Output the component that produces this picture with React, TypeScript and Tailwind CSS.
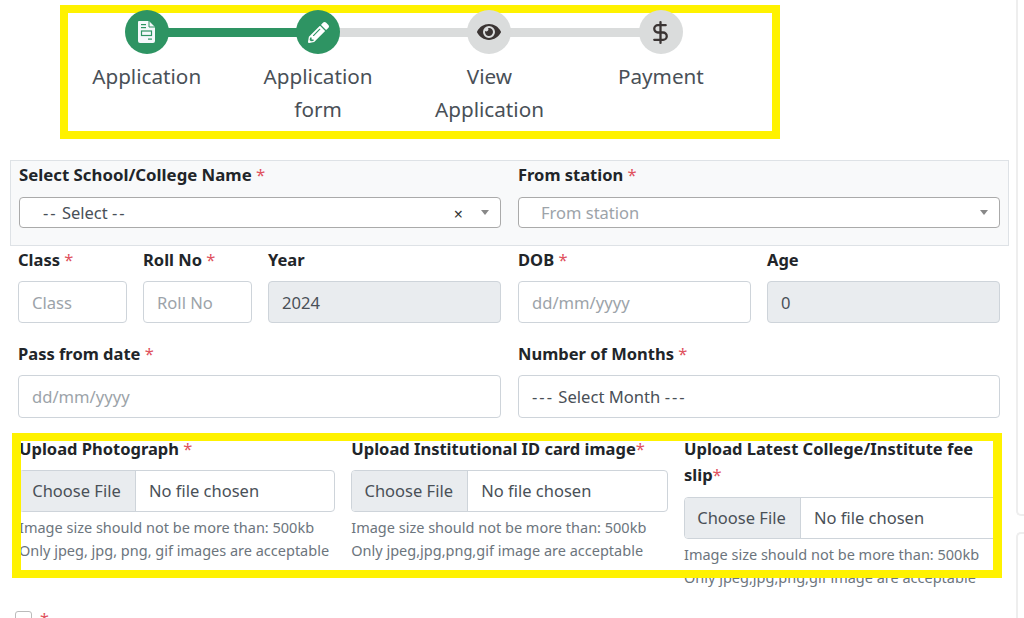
import React from "react";
import { FaPencilAlt, FaEye } from "react-icons/fa";
import { DollarSign } from "lucide-react";

function Req() { return <span className="text-[#e0525e] font-normal"> *</span>; }
function Dash({ children }: { children: string }) { return <span className="tracking-[2px]">{children}</span>; }
function Label({ children, req, className = "text-[16.5px]" }: { children: React.ReactNode; req?: boolean; className?: string }) {
  return <label className={`block font-bold text-[#212529] leading-[26px] ${className}`}>{children}{req && <Req />}</label>;
}
function Box({ text, ph, disabled, className = "h-[42px]" }: { text: React.ReactNode; ph?: boolean; disabled?: boolean; className?: string }) {
  return (
    <div className={`mt-[8px] flex items-center px-[13px] pt-[2px] rounded-[4px] border border-[#ced4da] text-[16.6px] ${disabled ? "bg-[#e9ecef]" : "bg-white"} ${ph ? "text-[#9ca3a9]" : "text-[#495057]"} ${className}`}>
      {text}
    </div>
  );
}
function Sel({ text, ph, clear }: { text: React.ReactNode; ph?: boolean; clear?: boolean }) {
  return (
    <div className="mt-[9px] h-[31px] flex items-center pl-[23px] pr-[11px] bg-white border border-[#aaaaaa] rounded-[4px] text-[16.5px]">
      <span className={`flex-1 pt-[2px] ${ph ? "text-[#9ca3a9] -ml-[1px]" : "text-[#495057]"}`}>{text}</span>
      {clear && <span className="text-[#333] text-[16px] mr-[18px] leading-none pt-[2px]">×</span>}
      <span className="w-0 h-0 border-x-[4px] border-x-transparent border-t-[5px] border-t-[#888888]" />
    </div>
  );
}
function Hint({ children }: { children: React.ReactNode }) {
  return <p className="mt-[4px] text-[14.5px] leading-[23px] text-[#6c757d]">{children}</p>;
}
function FileInput({ className = "mt-[8px]" }: { className?: string }) {
  return (
    <div className={`h-[42px] flex items-stretch border border-[#ced4da] rounded-[4px] bg-white text-[16.5px] text-[#495057] overflow-hidden ${className}`}>
      <span className="w-[116px] shrink-0 bg-[#e9ecef] border-r border-[#ced4da] flex items-center justify-center pr-[2px]">Choose File</span>
      <span className="pl-[13px] flex items-center">No file chosen</span>
    </div>
  );
}
function Step({ label, active, children }: { label: React.ReactNode; active?: boolean; children: React.ReactNode }) {
  return (
    <div className="w-[171.4px] flex flex-col items-center relative">
      <div className={`relative z-10 w-[44px] h-[44px] rounded-full flex items-center justify-center ${active ? "bg-[#2e9463] text-white" : "bg-[#dadcdc] text-[#3a3433]"}`}>
        {children}
      </div>
      <div className="text-center text-[#495057] text-[20.7px] leading-[33px] mt-[6px] w-[125px]">{label}</div>
    </div>
  );
}

export default function App() {
  return (
    <div className="relative w-[1024px] h-[618px] overflow-hidden bg-white flex" style={{ fontFamily: '"Noto Sans", sans-serif' }}>
      <main className="w-[1016px] shrink-0">
        <div className="pt-[10px]">
          <div className="relative flex ml-[61px] w-max">
            <div className="absolute left-[86px] top-[18px] w-[514px] h-[9px] bg-[#dadcdc]" />
            <div className="absolute left-[86px] top-[18px] w-[171px] h-[9px] bg-[#2e9463]" />
            <Step label="Application" active>
              <svg width="17" height="22" viewBox="0 0 17 22" fill="none">
                <path d="M1 0h10l6 6v14a2 2 0 0 1-2 2H2a2 2 0 0 1-2-2V1a1 1 0 0 1 1-1z" fill="#f4f8fb" />
                <path d="M11 0v6h6" stroke="#2e9463" strokeWidth="1" />
                <rect x="3" y="3" width="5" height="1.2" fill="#2e9463" />
                <rect x="3" y="6" width="5" height="1.2" fill="#2e9463" />
                <rect x="3.5" y="10" width="10" height="4.5" stroke="#2e9463" strokeWidth="1.2" />
                <rect x="10" y="17.5" width="4" height="1.2" fill="#2e9463" />
              </svg>
            </Step>
            <Step label={<>Application<br />form</>} active><FaPencilAlt size={21} /></Step>
            <Step label={<>View<br />Application</>}><FaEye size={24} /></Step>
            <Step label="Payment"><DollarSign size={25} strokeWidth={2.2} /></Step>
          </div>
        </div>

        <section className="mt-[34px] ml-[10px] w-[999px] h-[86px] border border-[#dee2e6] bg-[#f8f9fa] px-[8px] grid grid-cols-[482px_482px] gap-x-[17px]">
          <div className="pt-[1px]"><Label req className="text-[16.8px]">Select School/College Name</Label><Sel text={<><Dash>--</Dash> Select <Dash>--</Dash></>} clear /></div>
          <div className="pt-[1px]"><Label req>From station</Label><Sel text="From station" ph /></div>
        </section>

        <div className="ml-[18px] w-[982px] mt-[1px] grid grid-cols-[483px_482px] gap-x-[17px]">
          <div className="grid grid-cols-[109px_109px_233px] gap-x-[16px]">
            <div><Label req>Class</Label><Box text="Class" ph /></div>
            <div><Label req>Roll No</Label><Box text="Roll No" ph /></div>
            <div><Label>Year</Label><Box text="2024" disabled /></div>
          </div>
          <div className="grid grid-cols-[233px_233px] gap-x-[16px]">
            <div><Label req>DOB</Label><Box text="dd/mm/yyyy" ph /></div>
            <div><Label>Age</Label><Box text="0" disabled /></div>
          </div>
        </div>

        <div className="ml-[18px] w-[982px] mt-[18px] grid grid-cols-[483px_482px] gap-x-[17px]">
          <div><Label req>Pass from date</Label><Box className="h-[43px]" text="dd/mm/yyyy" ph /></div>
          <div><Label req>Number of Months</Label><Box className="h-[43px]" text={<span><Dash>---</Dash> Select Month <Dash>---</Dash></span>} /></div>
        </div>

        <div className="ml-[19px] w-[981px] mt-[18px] grid grid-cols-[316px_316.5px_316px] gap-x-[16.25px]">
          <div>
            <Label req>Upload Photograph</Label>
            <FileInput />
            <Hint>Image size should not be more than: 500kb<br />Only jpeg, jpg, png, gif images are acceptable</Hint>
          </div>
          <div>
            <Label>Upload Institutional ID card image<span className="text-[#e0525e] font-normal">*</span></Label>
            <FileInput />
            <Hint>Image size should not be more than: 500kb<br />Only jpeg,jpg,png,gif image are acceptable</Hint>
          </div>
          <div>
            <Label>Upload Latest College/Institute fee slip<span className="text-[#e0525e] font-normal">*</span></Label>
            <FileInput className="mt-[9px]" />
            <Hint>Image size should not be more than: 500kb<br />Only jpeg,jpg,png,gif image are acceptable</Hint>
          </div>
        </div>

        <div className="ml-[15px] mt-[22px] flex items-start gap-[8px]">
          <span className="w-[17px] h-[17px] rounded-[3px] border border-[#bbbbbb] bg-white" />
          <span className="text-[#e0525e] text-[16px] leading-none">*</span>
        </div>
      </main>

      <aside className="flex-1 flex flex-col">
        <div className="h-[516px] border-l-2 border-b-2 border-[#eeeeee] rounded-bl-[5px]" />
        <div className="mt-[16px] flex-1 border-l-2 border-t-2 border-[#eeeeee] rounded-tl-[5px]" />
      </aside>

      <div className="absolute left-[60px] top-[5px] w-[720px] h-[134px] border-[8px] border-[#fff200] pointer-events-none" />
      <div className="absolute left-[12px] top-[433px] w-[990px] h-[145px] border-x-[9px] border-y-[8px] border-[#fff200] pointer-events-none" />
    </div>
  );
}
